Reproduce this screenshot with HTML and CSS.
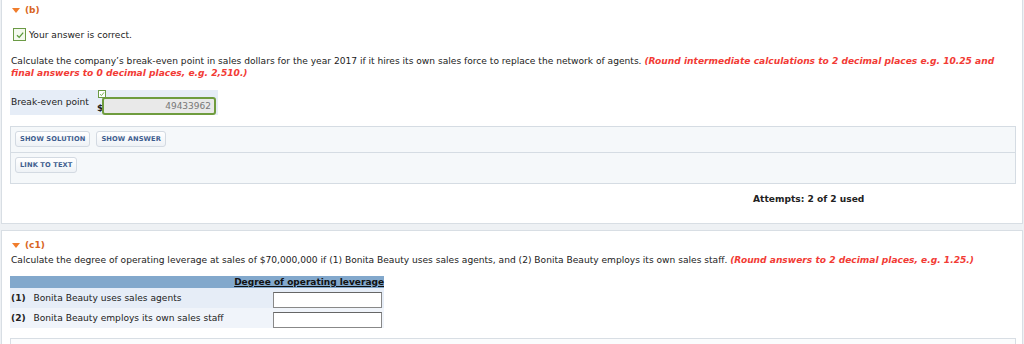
FILE: index.html
```html
<!DOCTYPE html>
<html lang="en">
<head>
    <meta charset="UTF-8">
    <title>Question Part</title>
    <link rel="stylesheet" href="styles.css">
</head>
<body>
    <div class="part part-first">
        <div class="part-title"><span class="arrow"></span>(b)</div>
        <div class="feedback">
            <span class="check-box">
                <svg width="10" height="10" viewBox="0 0 10 10"><path d="M2 5.2 L4.2 7.4 L8.2 2.6" fill="none" stroke="#5a9a3a" stroke-width="1.3"/></svg>
            </span>
            Your answer is correct.
        </div>
        <p class="question">Calculate the company’s break-even point in sales dollars for the year 2017 if it hires its own sales force to replace the network of agents. <em class="note">(Round intermediate calculations to 2 decimal places e.g. 10.25 and final answers to 0 decimal places, e.g. 2,510.)</em></p>
        <div class="answer-row">
            <span class="answer-label">Break-even point</span>
            <span class="answer-field">
                <span class="mini-check">
                    <svg width="6" height="6" viewBox="0 0 6 6"><path d="M1 3.2 L2.5 4.6 L5 1.4" fill="none" stroke="#6aaa44" stroke-width="0.9"/></svg>
                </span>
                <span class="dollar">$</span>
                <input class="answer-input" type="text" value="49433962" readonly>
            </span>
        </div>
        <div class="tools">
            <div class="tools-row">
                <button class="tool-btn">SHOW SOLUTION</button>
                <button class="tool-btn">SHOW ANSWER</button>
            </div>
            <div class="tools-row">
                <button class="tool-btn">LINK TO TEXT</button>
            </div>
        </div>
        <div class="attempts">Attempts: 2 of 2 used</div>
    </div>

    <div class="part part-second">
        <div class="part-title"><span class="arrow"></span>(c1)</div>
        <p class="question single">Calculate the degree of operating leverage at sales of $70,000,000 if (1) Bonita Beauty uses sales agents, and (2) Bonita Beauty employs its own sales staff. <em class="note">(Round answers to 2 decimal places, e.g. 1.25.)</em></p>
        <table class="dol-table">
            <tr class="head">
                <th></th>
                <th><span>Degree of operating leverage</span></th>
            </tr>
            <tr>
                <td><b class="num">(1)</b> Bonita Beauty uses sales agents</td>
                <td><input class="dol-input" type="text"></td>
            </tr>
            <tr>
                <td><b class="num">(2)</b> Bonita Beauty employs its own sales staff</td>
                <td><input class="dol-input" type="text"></td>
            </tr>
        </table>
        <div class="next-box"></div>
    </div>
</body>
</html>
```

FILE: styles.css
```css
* {
    margin: 0;
    padding: 0;
    box-sizing: border-box;
}
body {
    font-family: "DejaVu Sans", Verdana, sans-serif;
    font-size: 9.1px;
    color: #222;
    background: #eef1f4;
    padding: 0 1px;
    overflow: hidden;
}
.part {
    background: white;
    border: 1px solid #d8dee4;
    padding: 6px 6px 0 8px;
    margin-top: 6px;
}
.part-first {
    border-top: none;
    margin-top: 0;
    padding-top: 5px;
    height: 224px;
}
.part-second {
    padding-top: 9px;
}
.part-title {
    display: flex;
    align-items: center;
    color: #d8641e;
    font-weight: bold;
    font-size: 9px;
    height: 10px;
    padding-left: 2px;
}
.arrow {
    width: 0;
    height: 0;
    border-left: 4px solid transparent;
    border-right: 4px solid transparent;
    border-top: 5px solid #f07d2c;
    margin-right: 5px;
}
.feedback {
    display: flex;
    align-items: center;
    margin-top: 13px;
    padding-left: 3px;
    height: 13px;
}
.check-box {
    width: 13px;
    height: 13px;
    border: 1px solid #6b9a45;
    background: #f4f9ef;
    display: flex;
    align-items: center;
    justify-content: center;
    margin-right: 3px;
}
.question {
    margin-top: 14px;
    line-height: 12px;
    padding-left: 1px;
}
.question.single {
    margin-top: 4px;
}
.note {
    color: #f23b35;
    font-weight: bold;
}
.answer-row {
    margin-top: 11px;
    width: 208px;
    height: 25px;
    background: #e6edf7;
    display: flex;
    align-items: center;
    padding-left: 1px;
}
.answer-label {
    width: 86px;
    flex: none;
    margin-top: -1px;
}
.answer-field {
    display: grid;
    grid-template-columns: 5px 3px 111px;
    grid-template-rows: 8px 17px;
    height: 25px;
}
.mini-check {
    grid-row: 1;
    grid-column: 1 / 3;
    width: 8px;
    height: 8px;
    margin-left: 1px;
    border: 1px solid #6b9a45;
    background: white;
    display: flex;
    align-items: center;
    justify-content: center;
}
.dollar {
    grid-row: 2;
    grid-column: 1;
    font-weight: bold;
    align-self: end;
    line-height: 10px;
    margin-bottom: 2px;
}
.answer-input {
    grid-row: 2;
    grid-column: 2 / 4;
    width: 114px;
    height: 18px;
    margin-top: -1px;
    border: 2px solid #6f9c3e;
    border-radius: 3px;
    background: #e9e9e9;
    color: #777;
    text-align: right;
    font-family: inherit;
    font-size: 9px;
    padding-right: 3px;
    outline: none;
}
.tools {
    margin-top: 11px;
    background: #f5f8fa;
    border: 1px solid #d5dce3;
    height: 58px;
}
.tools-row {
    display: flex;
    gap: 6px;
    padding: 4px 4px 4px 4px;
    height: 25px;
}
.tools-row + .tools-row {
    border-top: 1px solid #d5dce3;
}
.tool-btn {
    font-family: inherit;
    font-size: 6.7px;
    font-weight: bold;
    color: #3e5d8f;
    background: linear-gradient(#ffffff, #eef2f6);
    border: 1px solid #d3dae2;
    border-radius: 3px;
    height: 16px;
    padding: 0 4px;
    letter-spacing: 0.1px;
}
.attempts {
    font-weight: bold;
    margin-top: 10px;
    padding-left: 743px;
}
.dol-table {
    margin-top: 10px;
    border-collapse: collapse;
    width: 374px;
}
.dol-table th {
    background: #82a8cc;
    height: 12px;
    padding: 0;
    text-align: right;
    font-size: 9px;
    line-height: 11px;
    color: #111;
    white-space: nowrap;
}
.dol-table th span {
    text-decoration: underline;
}
.dol-table td {
    background: #e6edf7;
    height: 20px;
    padding: 0;
    vertical-align: middle;
}
.dol-table td:first-child {
    padding-left: 1px;
}
.dol-table td:last-child {
    width: 151px;
    vertical-align: bottom;
}
.dol-table tr:nth-child(3) td {
    background: #f0f4fa;
}
.num {
    margin-right: 5px;
}
.dol-input {
    display: block;
    width: 109px;
    height: 16px;
    margin: 0 2px 0 auto;
    border: 1px solid #888;
    border-top-color: #666;
    background: white;
    outline: none;
}
.next-box {
    margin-top: 10px;
    height: 10px;
    border: 1px solid #d8dee4;
    border-bottom: none;
    background: #fbfcfd;
}
```
